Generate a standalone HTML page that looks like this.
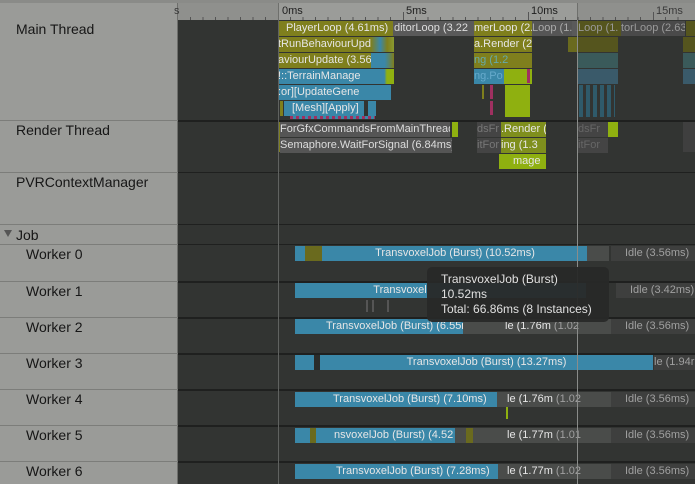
<!DOCTYPE html>
<html><head><meta charset="utf-8"><style>
*{margin:0;padding:0;box-sizing:border-box}
body{width:695px;height:484px;overflow:hidden;background:#323432;font-family:"Liberation Sans",sans-serif;position:relative}
.a{position:absolute}
.l{position:absolute;left:0;width:178px;background:#9a9b98;color:#161616;font-size:14px}
.t{position:absolute;font-size:11px;color:#e6e6e6;white-space:nowrap;overflow:hidden;height:15px;line-height:15px}
.d{color:#a0a0a0}
</style></head><body>
<!-- left panel -->
<div class="l" style="top:0;height:484px;border-right:1px solid #6e6f6c"></div>
<div class="a" style="left:0;top:0;width:695px;height:3px;background:#8a8b88"></div>
<div class="a" style="left:16px;top:21px;font-size:14px;color:#161616">Main Thread</div>
<div class="a" style="left:16px;top:122px;font-size:14px;color:#161616">Render Thread</div>
<div class="a" style="left:16px;top:174px;font-size:14px;color:#161616">PVRContextManager</div>
<div class="a" style="left:4px;top:230px;width:0;height:0;border-left:4px solid transparent;border-right:4px solid transparent;border-top:7px solid #555"></div>
<div class="a" style="left:16px;top:227px;font-size:14px;color:#161616">Job</div>
<div class="a" style="left:26px;top:246px;font-size:14px;color:#161616">Worker 0</div>
<div class="a" style="left:26px;top:283px;font-size:14px;color:#161616">Worker 1</div>
<div class="a" style="left:26px;top:319px;font-size:14px;color:#161616">Worker 2</div>
<div class="a" style="left:26px;top:355px;font-size:14px;color:#161616">Worker 3</div>
<div class="a" style="left:26px;top:391px;font-size:14px;color:#161616">Worker 4</div>
<div class="a" style="left:26px;top:427px;font-size:14px;color:#161616">Worker 5</div>
<div class="a" style="left:26px;top:463px;font-size:14px;color:#161616">Worker 6</div>
<!-- left separators -->
<div class="a" style="left:0;top:120px;width:178px;height:1px;background:#7c7d7a"></div>
<div class="a" style="left:0;top:172px;width:178px;height:1px;background:#7c7d7a"></div>
<div class="a" style="left:0;top:224px;width:178px;height:1px;background:#7c7d7a"></div>
<div class="a" style="left:0;top:244px;width:178px;height:1px;background:#7c7d7a"></div>
<div class="a" style="left:0;top:281px;width:178px;height:1px;background:#7c7d7a"></div>
<div class="a" style="left:0;top:317px;width:178px;height:1px;background:#7c7d7a"></div>
<div class="a" style="left:0;top:353px;width:178px;height:1px;background:#7c7d7a"></div>
<div class="a" style="left:0;top:389px;width:178px;height:1px;background:#7c7d7a"></div>
<div class="a" style="left:0;top:425px;width:178px;height:1px;background:#7c7d7a"></div>
<div class="a" style="left:0;top:461px;width:178px;height:1px;background:#7c7d7a"></div>

<!-- ruler -->
<div class="a" style="left:178px;top:3px;width:517px;height:17px;background:#8f908d"></div>
<div class="a" style="left:278px;top:3px;width:300px;height:17px;background:#9b9c99;border-left:1px solid #6e6f6c;border-right:1px solid #6e6f6c"></div>
<svg class="a" style="left:178px;top:3px" width="517" height="17">
<g stroke="#555" stroke-width="1">
<path d="M12.5 14v3M25 14v3M37.5 14v3M50 14v3M62.5 14v3M75 14v3M87.5 14v3M112.5 14v3M125 14v3M137.5 14v3M150 14v3M162.5 14v3M175 14v3M187.5 14v3M200 14v3M212.5 14v3M237.5 14v3M250 14v3M262.5 14v3M275 14v3M287.5 14v3M300 14v3M312.5 14v3M325 14v3M337.5 14v3M362.5 14v3M375 14v3M387.5 14v3M400 14v3M412.5 14v3M425 14v3M437.5 14v3M450 14v3M462.5 14v3M487.5 14v3M500 14v3"/>
<path d="M225.5 9v8M350.5 9v8M475.5 9v8"/>
</g></svg>
<div class="a" style="left:282px;top:5px;font-size:11px;color:#1e1e1e">0ms</div>
<div class="a" style="left:406px;top:5px;font-size:11px;color:#1e1e1e">5ms</div>
<div class="a" style="left:531px;top:5px;font-size:11px;color:#1e1e1e">10ms</div>
<div class="a" style="left:656px;top:5px;font-size:11px;color:#3a3a3a">15ms</div>
<div class="a" style="left:174px;top:5px;font-size:11px;color:#3a3a3a">s</div>

<!-- right area row separators -->
<div class="a" style="left:178px;top:120px;width:517px;height:2px;background:#1f201f"></div>
<div class="a" style="left:178px;top:172px;width:517px;height:1px;background:#1f201f"></div>
<div class="a" style="left:178px;top:224px;width:517px;height:1px;background:#1f201f"></div>
<div class="a" style="left:178px;top:244px;width:517px;height:1px;background:#1f201f"></div>
<div class="a" style="left:178px;top:281px;width:517px;height:2px;background:#1f201f"></div>
<div class="a" style="left:178px;top:317px;width:517px;height:2px;background:#1f201f"></div>
<div class="a" style="left:178px;top:353px;width:517px;height:2px;background:#1f201f"></div>
<div class="a" style="left:178px;top:389px;width:517px;height:2px;background:#1f201f"></div>
<div class="a" style="left:178px;top:425px;width:517px;height:2px;background:#1f201f"></div>
<div class="a" style="left:178px;top:461px;width:517px;height:2px;background:#1f201f"></div>

<!-- main thread -->
<div class="t" style="left:278px;top:21px;width:370px;background:#5a5a5a"></div>
<div class="t" style="left:278px;top:21px;width:115px;background:#7f7f1d;padding-left:8px">PlayerLoop (4.61ms)</div>
<div class="t" style="left:394px;top:21px;width:80px;background:#5a5a5a;color:#ddd">ditorLoop (3.22</div>
<div class="t" style="left:474px;top:21px;width:58px;background:#7f7f1d">merLoop (2.34</div>
<div class="t" style="left:532px;top:21px;width:40px;background:#555;color:#aaa">Loop (1.</div>
<div class="t" style="left:578px;top:21px;width:43px;background:#55551e;color:#999">Loop (1.</div>
<div class="t" style="left:621px;top:21px;width:64px;background:#4a4a4a;color:#999">torLoop (2.63</div>
<div class="t" style="left:686px;top:21px;width:9px;background:#55551e"></div>

<div class="t" style="left:278px;top:37px;width:93px;background:#7f7f1d">tRunBehaviourUpd</div>
<div class="t" style="left:371px;top:37px;width:23px;background:linear-gradient(90deg,#7f7f1d,#3a87a8 40%,#7f7f1d 70%,#8a9a30)"></div>
<div class="t" style="left:278px;top:53px;width:93px;background:#7f7f1d">aviourUpdate (3.56</div>
<div class="t" style="left:371px;top:53px;width:23px;background:linear-gradient(90deg,#3a87a8,#3a87a8 60%,#7f7f1d)"></div>
<div class="t" style="left:278px;top:69px;width:92px;background:#3a87a8">!::TerrainManage</div>
<div class="t" style="left:370px;top:69px;width:24px;background:linear-gradient(90deg,#3a87a8 60%,#8fb010 70%)"></div>
<div class="t" style="left:278px;top:85px;width:92px;background:#3a87a8">:or][UpdateGene</div>
<div class="t" style="left:370px;top:85px;width:21px;background:#3a87a8"></div>
<div class="t" style="left:284px;top:101px;width:80px;background:#3a87a8;padding-left:8px">[Mesh][Apply]</div>
<div class="t" style="left:280px;top:101px;width:3px;background:#7f7f1d"></div>
<div class="a" style="left:368px;top:101px;width:8px;height:15px;background:#3a87a8"></div>
<div class="a" style="left:290px;top:116px;width:85px;height:3px;background:repeating-linear-gradient(90deg,#a03060 0 3px,#3a87a8 3px 6px)"></div>

<div class="t" style="left:474px;top:37px;width:58px;background:#7f7f1d">a.Render (2</div>
<div class="t" style="left:474px;top:53px;width:58px;background:#7f7f1d;color:#6aa">ng (1.2</div>
<div class="t" style="left:474px;top:69px;width:30px;background:#3a87a8;color:#6ac">ng.Po</div>
<div class="t" style="left:504px;top:69px;width:28px;background:#8fb010"></div>
<div class="a" style="left:505px;top:85px;width:25px;height:32px;background:#8fb010"></div>
<div class="a" style="left:490px;top:85px;width:3px;height:14px;background:#a03060"></div>
<div class="a" style="left:490px;top:101px;width:3px;height:14px;background:#a03060"></div>
<div class="a" style="left:482px;top:85px;width:2px;height:14px;background:#7f7f1d"></div>
<div class="a" style="left:527px;top:69px;width:3px;height:14px;background:#a03060"></div>

<div class="t" style="left:568px;top:37px;width:10px;background:#6a6a1e"></div>
<div class="t" style="left:578px;top:37px;width:40px;background:#55551e"></div>
<div class="t" style="left:578px;top:53px;width:40px;background:#3a5a5a"></div>
<div class="t" style="left:578px;top:69px;width:40px;background:#3a5a6a"></div>
<div class="a" style="left:579px;top:85px;width:36px;height:32px;background:repeating-linear-gradient(90deg,#2f5a6a 0 4px,#323432 4px 7px)"></div>
<div class="t" style="left:683px;top:37px;width:12px;background:#55551e"></div>
<div class="t" style="left:683px;top:53px;width:12px;background:#3a5a5a"></div>
<div class="t" style="left:683px;top:69px;width:12px;background:#3a5a6a"></div>

<!-- render thread -->
<div class="t" style="left:280px;top:122px;width:170px;background:#555;color:#ddd">ForGfxCommandsFromMainThread</div>
<div class="a" style="left:278px;top:122px;width:2px;height:30px;background:#7f7f1d"></div>
<div class="a" style="left:452px;top:122px;width:6px;height:15px;background:#8fb010"></div>
<div class="t" style="left:280px;top:138px;width:172px;background:#555;color:#ddd">Semaphore.WaitForSignal (6.84ms)</div>
<div class="t" style="left:477px;top:122px;width:24px;background:#444;color:#777">dsFr</div>
<div class="t" style="left:501px;top:122px;width:45px;background:#7f8f1d">.Render (</div>
<div class="t" style="left:477px;top:138px;width:24px;background:#444;color:#777">itFor</div>
<div class="t" style="left:501px;top:138px;width:45px;background:#7f8f1d">ing (1.3</div>
<div class="t" style="left:499px;top:154px;width:47px;background:#8fb010;padding-left:14px">mage</div>
<div class="t" style="left:578px;top:122px;width:30px;background:#444;color:#666">dsFr</div>
<div class="a" style="left:608px;top:122px;width:10px;height:15px;background:#8fb010"></div>
<div class="t" style="left:578px;top:138px;width:30px;background:#444;color:#666">itFor</div>
<div class="a" style="left:683px;top:122px;width:12px;height:30px;background:#3f3f3f"></div>

<!-- workers -->
<div class="a" style="left:295px;top:246px;width:292px;height:15px;background:#3a87a8"></div>
<div class="a" style="left:305px;top:246px;width:17px;height:15px;background:#6a6a1e"></div>
<div class="t" style="left:323px;top:246px;width:264px;text-align:center">TransvoxelJob (Burst) (10.52ms)</div>
<div class="a" style="left:587px;top:246px;width:22px;height:15px;background:#4a4c4a"></div>
<div class="t d" style="left:611px;top:246px;width:84px;background:#3e3f3e;padding-left:14px">Idle (3.56ms)</div>

<div class="a" style="left:295px;top:283px;width:291px;height:15px;background:#3a87a8"></div>
<div class="t" style="left:320px;top:283px;width:160px;text-align:center">Transvoxel</div>
<div class="t d" style="left:616px;top:283px;width:79px;background:#3e3f3e;padding-left:14px">Idle (3.42ms)</div>
<div class="a" style="left:366px;top:300px;width:2px;height:12px;background:#555"></div>
<div class="a" style="left:372px;top:300px;width:2px;height:12px;background:#555"></div>
<div class="a" style="left:387px;top:300px;width:2px;height:12px;background:#555"></div>

<div class="a" style="left:295px;top:319px;width:168px;height:15px;background:#3a87a8"></div>
<div class="t" style="left:320px;top:319px;width:143px;padding-left:6px">TransvoxelJob (Burst) (6.55ms)</div>
<div class="t" style="left:463px;top:319px;width:148px;background:#4a4c4a;padding-left:42px">le (1.76m <span class="d">(1.02</span></div>
<div class="t d" style="left:611px;top:319px;width:84px;background:#3e3f3e;padding-left:14px">Idle (3.56ms)</div>

<div class="a" style="left:295px;top:355px;width:358px;height:15px;background:#3a87a8"></div>
<div class="a" style="left:314px;top:355px;width:6px;height:15px;background:#2a2c2a"></div>
<div class="t" style="left:320px;top:355px;width:333px;text-align:center">TransvoxelJob (Burst) (13.27ms)</div>
<div class="t d" style="left:654px;top:355px;width:41px;background:#3e3f3e">le (1.94r</div>

<div class="a" style="left:295px;top:392px;width:202px;height:15px;background:#3a87a8"></div>
<div class="t" style="left:320px;top:392px;width:177px;padding-left:13px">TransvoxelJob (Burst) (7.10ms)</div>
<div class="t" style="left:497px;top:392px;width:114px;background:#4a4c4a;padding-left:10px">le (1.76m <span class="d">(1.02</span></div>
<div class="a" style="left:506px;top:407px;width:2px;height:12px;background:#8fb010"></div>
<div class="t d" style="left:611px;top:392px;width:84px;background:#3e3f3e;padding-left:14px">Idle (3.56ms)</div>

<div class="a" style="left:295px;top:428px;width:160px;height:15px;background:#3a87a8"></div>
<div class="a" style="left:310px;top:428px;width:6px;height:15px;background:#6a6a1e"></div>
<div class="t" style="left:334px;top:428px;width:121px">nsvoxelJob (Burst) (4.52</div>
<div class="t" style="left:455px;top:428px;width:156px;background:#4a4c4a;padding-left:52px">le (1.77m <span class="d">(1.01</span></div>
<div class="a" style="left:466px;top:428px;width:7px;height:15px;background:#6a6a1e"></div>
<div class="t d" style="left:611px;top:428px;width:84px;background:#3e3f3e;padding-left:14px">Idle (3.56ms)</div>

<div class="a" style="left:295px;top:464px;width:203px;height:15px;background:#3a87a8"></div>
<div class="t" style="left:320px;top:464px;width:178px;padding-left:16px">TransvoxelJob (Burst) (7.28ms)</div>
<div class="t" style="left:498px;top:464px;width:113px;background:#4a4c4a;padding-left:9px">le (1.77m <span class="d">(1.02</span></div>
<div class="t d" style="left:611px;top:464px;width:84px;background:#3e3f3e;padding-left:14px">Idle (3.56ms)</div>

<!-- frame lines -->
<div class="a" style="left:278px;top:20px;width:1px;height:464px;background:#606260"></div>
<div class="a" style="left:577px;top:20px;width:1px;height:464px;background:#8a8c8a"></div>

<!-- tooltip -->
<div class="a" style="left:427px;top:267px;width:182px;height:55px;background:rgba(40,41,40,0.95);border-radius:5px;color:#e0e0e0;font-size:12px;line-height:15px;padding:5px 0 0 14px">TransvoxelJob (Burst)<br>10.52ms<br>Total: 66.86ms (8 Instances)</div>
</body></html>
